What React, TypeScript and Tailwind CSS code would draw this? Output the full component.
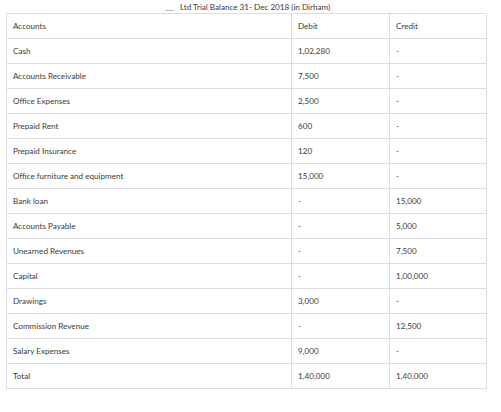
import React from "react";

const rows: [string, string, string][] = [
  ["Accounts", "Debit", "Credit"],
  ["Cash", "1,02,280", "-"],
  ["Accounts Receivable", "7,500", "-"],
  ["Office Expenses", "2,500", "-"],
  ["Prepaid Rent", "600", "-"],
  ["Prepaid Insurance", "120", "-"],
  ["Office furniture and equipment", "15,000", "-"],
  ["Bank loan", "-", "15,000"],
  ["Accounts Payable", "-", "5,000"],
  ["Unearned Revenues", "-", "7,500"],
  ["Capital", "-", "1,00,000"],
  ["Drawings", "3,000", "-"],
  ["Commission Revenue", "-", "12,500"],
  ["Salary Expenses", "9,000", "-"],
  ["Total", "1,40,000", "1,40,000"],
];

export default function App() {
  return (
    <div
      className="w-[501px] h-[412px] bg-white text-[#3a3a3a] text-[8.1px] leading-none"
      style={{ fontFamily: 'Lato, "Noto Sans", sans-serif' }}
    >
      <div className="h-[13px] flex items-start pt-[3px] pl-[165px]">
        <span className="inline-block w-[9px] border-b border-[#bbb] h-[8px] mr-[6px]"></span>
        <span>Ltd Trial Balance 31- Dec 2018 (in Dirham)</span>
      </div>
      <div className="ml-[6px] w-[481px] border border-[#dcdce3]">
        {rows.map((r, i) => (
          <div
            key={i}
            className={`grid grid-cols-[284px_98px_1fr] ${i > 0 ? "h-[25px] border-t border-[#dcdce3]" : "h-[24px]"}`}
          >
            <div className="flex items-center pl-[6px]">{r[0]}</div>
            <div className="flex items-center pl-[6px] border-l border-[#dcdce3]">{r[1]}</div>
            <div className="flex items-center pl-[6px] border-l border-[#dcdce3]">{r[2]}</div>
          </div>
        ))}
      </div>
    </div>
  );
}
